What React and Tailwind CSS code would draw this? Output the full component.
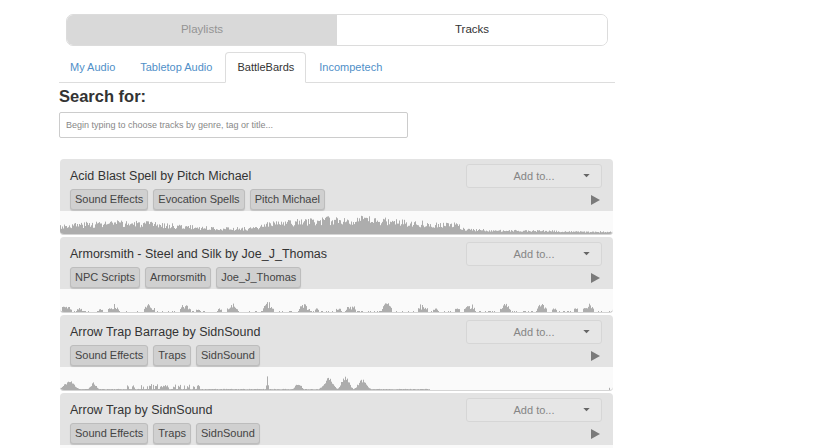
import { useMemo } from 'react';

const FONT = { fontFamily: '"Liberation Sans", Arial, Helvetica, sans-serif' };

function rng(seed) {
  let a = seed >>> 0;
  return () => {
    a = (a + 0x6d2b79f5) >>> 0;
    let t = a;
    t = Math.imul(t ^ (t >>> 15), t | 1);
    t ^= t + Math.imul(t ^ (t >>> 7), t | 61);
    return ((t ^ (t >>> 14)) >>> 0) / 4294967296;
  };
}

// envelopes: return bar height (px) at x in 0..552
const envelopes = {
  dense: (x, r) => {
    let base = 9 + 3 * Math.sin(x / 37);
    if (x > 200 && x < 400) base += 4;
    if (x > 400) base = Math.max(2.5, base - (x - 400) / 12);
    return base * (0.55 + r() * 0.6);
  },
  sparse: (x, r) => {
    const c = Math.sin(x / 6.3) + Math.sin(x / 2.7) * 0.6;
    if (c < 0.4) return r() < 0.3 ? 1 : 0;
    return 2 + r() * 6 * (c - 0.2);
  },
  clusters: (x, r) => {
    const peaks = [
      [9, 7, 9], [33, 4, 7], [207, 1, 14], [238, 4, 7], [268, 6, 12],
      [285, 5, 14], [302, 6, 10],
    ];
    let h = 0;
    for (const [c, w, a] of peaks) {
      const d = Math.abs(x - c);
      if (d < w * 2.2) h = Math.max(h, a * Math.exp(-(d * d) / (w * w)));
    }
    if (x > 62 && x < 140 && r() < 0.45) h = Math.max(h, 3 + r() * 3);
    if (x < 370) h = Math.max(h, 1);
    if (x === 549) h = 2;
    return h * (0.7 + r() * 0.4);
  },
  none: () => 0,
};

function Wave({ kind, seed }) {
  const d = useMemo(() => {
    const r = rng(seed);
    const env = envelopes[kind];
    let p = '';
    for (let x = 0; x < 552; x++) {
      const h = env(x, r);
      if (h > 0.3) p += `M${x + 0.5} 22V${(22 - Math.min(h, 20)).toFixed(1)}`;
    }
    return p;
  }, [kind, seed]);
  return (
    <div className="h-[24px] pt-[1px] bg-[#fafafa] rounded-b-[4px] border-b border-[#d5d5d5] overflow-hidden">
      <svg width="552" height="22" viewBox="0 0 552 22" className="block">
        <path d={d} stroke="#adadad" strokeWidth="1" fill="none" />
      </svg>
    </div>
  );
}

function Tag({ children }) {
  return (
    <span className="h-[21px] px-[4px] flex items-center rounded-[3px] bg-[#d0d0d0] border border-[#bdbdbd] text-[11px] text-[#444] shadow-[0_1px_1px_rgba(0,0,0,0.15)]">
      {children}
    </span>
  );
}

function Card({ title, tags, wave, seed }) {
  return (
    <div className="w-[553px] bg-[#e3e3e3] rounded-[4px] mb-[2px] shrink-0">
      <div className="flex pl-[10px] pr-[11px] pt-[5px] h-[52px]">
        <div className="flex-1 flex flex-col">
          <div className="h-[24px] flex items-center text-[12.5px] text-[#333]">{title}</div>
          <div className="flex gap-[5px] mt-[1px]">
            {tags.map((t) => (
              <Tag key={t}>{t}</Tag>
            ))}
          </div>
        </div>
        <div className="w-[136px] flex flex-col items-end">
          <button className="w-[136px] h-[24px] rounded-[3px] border border-[#d6d6d6] bg-[#e6e6e6] flex items-center text-[11px] text-[#858585]" style={FONT}>
            <span className="flex-1 text-center pl-[18px]">Add to...</span>
            <svg width="7" height="4" viewBox="0 0 8 5" className="mr-[11px]">
              <path d="M0 0h8L4 4z" fill="#666" />
            </svg>
          </button>
          <svg width="9" height="10" viewBox="0 0 9 10" className="mt-[7px] mr-[2px]">
            <path d="M0 0L9 5L0 10z" fill="#7a7a7a" />
          </svg>
        </div>
      </div>
      <Wave kind={wave} seed={seed} />
    </div>
  );
}

const tracks = [
  { title: 'Acid Blast Spell by Pitch Michael', tags: ['Sound Effects', 'Evocation Spells', 'Pitch Michael'], wave: 'dense', seed: 3 },
  { title: 'Armorsmith - Steel and Silk by Joe_J_Thomas', tags: ['NPC Scripts', 'Armorsmith', 'Joe_J_Thomas'], wave: 'sparse', seed: 7 },
  { title: 'Arrow Trap Barrage by SidnSound', tags: ['Sound Effects', 'Traps', 'SidnSound'], wave: 'clusters', seed: 11 },
  { title: 'Arrow Trap by SidnSound', tags: ['Sound Effects', 'Traps', 'SidnSound'], wave: 'none', seed: 1 },
];

export default function App() {
  return (
    <div className="w-[825px] h-[448px] overflow-hidden bg-white" style={FONT}>
      <div className="w-[556px] ml-[59px] pt-[14px]">
        {/* Playlists / Tracks toggle */}
        <div className="mx-[7px] h-[32px] flex rounded-[7px] border border-[#dcdcdc] overflow-hidden text-[11.5px]">
          <div className="flex-1 bg-[#d9d9d9] flex items-center justify-center text-[#949494]">Playlists</div>
          <div className="flex-1 bg-white flex items-center justify-center text-[#333]">Tracks</div>
        </div>

        {/* Source tabs */}
        <div className="mt-[6px] h-[31px] flex items-end border-b border-[#dddddd] text-[11px]">
          <div className="h-[30px] px-[11px] flex items-center text-[#4f8fc8]">My Audio</div>
          <div className="h-[30px] px-[11px] ml-[3px] flex items-center text-[#4f8fc8]">Tabletop Audio</div>
          <div className="h-[31px] px-[11px] ml-[2px] -mb-px flex items-center text-[#333] bg-white border border-[#dddddd] border-b-white rounded-t-[4px]">BattleBards</div>
          <div className="h-[30px] px-[11px] ml-[2px] flex items-center text-[#4f8fc8]">Incompetech</div>
        </div>

        <h2 className="mt-[3px] text-[16.5px] font-bold text-[#333] leading-[20px]">Search for:</h2>
        <input
          className="mt-[6px] w-[349px] h-[26px] px-[6px] text-[9px] border border-[#cccccc] rounded-[2px] outline-none placeholder:text-[#888]"
          placeholder="Begin typing to choose tracks by genre, tag or title..."
          style={FONT}
        />

        <div className="mt-[21px] ml-[1px] flex flex-col">
          {tracks.map((t) => (
            <Card key={t.title} {...t} />
          ))}
        </div>
      </div>
    </div>
  );
}
